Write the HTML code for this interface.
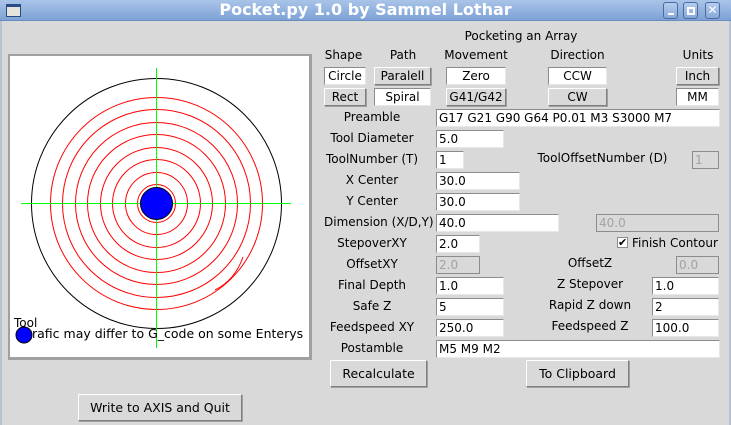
<!DOCTYPE html>
<html><head><style>
*{box-sizing:border-box;margin:0;padding:0}
body{width:731px;height:425px;background:#d9d9d9;font-family:"DejaVu Sans","Liberation Sans",sans-serif;font-size:12px;color:#000;position:relative;overflow:hidden}
.a{position:absolute}
.tb{left:0;top:0;width:731px;height:21px;background:linear-gradient(#a9c4e8,#7ea2d6);border-bottom:1px solid #6a8cc0}
.t{left:0;top:0px;width:731px;text-align:center;color:#fff;font-weight:bold;font-size:16px}
.wb{top:2px;width:15px;height:17px;border:1px solid #4a6aa0;border-radius:3px;background:linear-gradient(#b5cdee,#86a8d8)}
.e{position:absolute;background:#fff;border:1px solid #8c8c8c;border-right-color:#e8e8e8;border-bottom-color:#e8e8e8;height:18px;line-height:16px;padding-left:2px;white-space:nowrap}
.d{background:#d9d9d9;color:#a3a3a3;border-color:#8c8c8c}
.c{text-align:center;padding:0}
.b{position:absolute;background:#d9d9d9;border:1px solid #fff;border-right-color:#7f7f7f;border-bottom-color:#7f7f7f;box-shadow:1px 1px 0 #a0a0a0;height:18px;line-height:16px;text-align:center}
.l{position:absolute;text-align:center;white-space:nowrap}
.lc{width:110px;left:317px}
.rc{width:130px;left:525px}
</style></head><body>
<div class="a tb"></div>
<div class="a" style="left:6px;top:4px;width:15px;height:13px;border:1px solid #2b4b85;border-top-width:3px;background:#e4e4dc"></div>
<div class="a t">Pocket.py 1.0 by Sammel Lothar</div>
<div class="a wb" style="left:663px"><div class="a" style="left:4px;top:10px;width:6px;height:2px;background:#fff"></div></div>
<div class="a wb" style="left:683px"><div class="a" style="left:3px;top:4px;width:8px;height:8px;border:2px solid #fff"></div></div>
<div class="a wb" style="left:705px;color:#fff;font-weight:bold;font-size:12px;text-align:center;line-height:15px">✕</div>
<div class="a" style="left:0;top:21px;width:2px;height:404px;background:#b8c2d0"></div>
<div class="a" style="left:729px;top:21px;width:2px;height:404px;background:#b8c2d0"></div>

<!-- canvas -->
<div class="a" style="left:8px;top:54px;width:304px;height:306px;background:#a0a0a0"></div>
<div class="a" style="left:10px;top:56px;width:299px;height:301px;background:#fff"></div>
<svg class="a" style="left:0;top:0" width="320" height="360">
<circle cx="156.5" cy="203.5" r="125" fill="none" stroke="#000" stroke-width="1"/>
<g fill="none" stroke="#f00" stroke-width="1">
<circle cx="156.5" cy="203.5" r="106"/><circle cx="156.5" cy="203.5" r="94"/>
<circle cx="156.5" cy="203.5" r="81"/><circle cx="156.5" cy="203.5" r="69"/>
<circle cx="156.5" cy="203.5" r="56"/><circle cx="156.5" cy="203.5" r="44"/>
<circle cx="156.5" cy="203.5" r="31"/><circle cx="156.5" cy="203.5" r="19"/>
<path d="M156.5 203.5H263"/>
<path d="M243 257 Q235 280 215 290"/>
</g>
<path d="M156.5 68V348M21 203.5H291" stroke="#0f0" stroke-width="1"/>
<circle cx="156.5" cy="203.5" r="16" fill="#00f" stroke="#000"/>
<circle cx="24" cy="335" r="8" fill="#00f" stroke="#000"/>
</svg>
<div class="l" style="left:14px;top:316px">Tool</div>
<div class="l" style="left:32px;top:326px;font-size:12.5px">rafic may differ to G_code on some Enterys</div>
<div class="b" style="left:78px;top:394px;width:164px;height:27px;line-height:25px;font-size:12.5px">Write to AXIS and Quit</div>

<!-- right panel -->
<div class="l" style="left:430px;top:29px;width:182px">Pocketing an Array</div>
<div class="l" style="left:320px;top:48px;width:47px">Shape</div>
<div class="l" style="left:374px;top:48px;width:58px">Path</div>
<div class="l" style="left:440px;top:48px;width:72px">Movement</div>
<div class="l" style="left:540px;top:48px;width:75px">Direction</div>
<div class="l" style="left:670px;top:48px;width:56px">Units</div>

<div class="e c" style="left:324px;top:67px;width:42px">Circle</div>
<div class="b" style="left:374px;top:67px;width:57px">Paralell</div>
<div class="e c" style="left:446px;top:67px;width:60px">Zero</div>
<div class="e c" style="left:548px;top:67px;width:59px">CCW</div>
<div class="b" style="left:676px;top:67px;width:43px">Inch</div>
<div class="b" style="left:324px;top:88px;width:42px">Rect</div>
<div class="e c" style="left:374px;top:88px;width:57px">Spiral</div>
<div class="b" style="left:446px;top:88px;width:60px">G41/G42</div>
<div class="b" style="left:548px;top:88px;width:59px">CW</div>
<div class="e c" style="left:676px;top:88px;width:43px">MM</div>

<div class="l lc" style="top:110px">Preamble</div>
<div class="e" style="left:436px;top:109px;width:284px">G17 G21 G90 G64 P0.01 M3 S3000 M7</div>
<div class="l lc" style="top:131px">Tool Diameter</div>
<div class="e" style="left:436px;top:130px;width:68px">5.0</div>
<div class="l lc" style="top:152px">ToolNumber (T)</div>
<div class="e" style="left:436px;top:151px;width:28px">1</div>
<div class="l" style="left:535px;top:151px;width:135px">ToolOffsetNumber (D)</div>
<div class="e d" style="left:692px;top:151px;width:27px">1</div>
<div class="l lc" style="top:173px">X Center</div>
<div class="e" style="left:436px;top:172px;width:84px">30.0</div>
<div class="l lc" style="top:194px">Y Center</div>
<div class="e" style="left:436px;top:193px;width:84px">30.0</div>
<div class="l" style="left:324px;top:215px;width:113px;text-align:left">Dimension (X/D,Y)</div>
<div class="e" style="left:436px;top:214px;width:123px">40.0</div>
<div class="e d" style="left:596px;top:214px;width:123px">40.0</div>
<div class="l lc" style="top:236px">StepoverXY</div>
<div class="e" style="left:436px;top:235px;width:44px">2.0</div>
<div class="a" style="left:617px;top:237px;width:11px;height:11px;background:#fff;border:1px solid #8c8c8c;font-size:11px;line-height:9px;text-align:center">✔</div>
<div class="l" style="left:632px;top:236px">Finish Contour</div>
<div class="l lc" style="top:257px">OffsetXY</div>
<div class="e d" style="left:436px;top:256px;width:44px">2.0</div>
<div class="l rc" style="top:256px">OffsetZ</div>
<div class="e d" style="left:676px;top:256px;width:43px">0.0</div>
<div class="l lc" style="top:278px">Final Depth</div>
<div class="e" style="left:436px;top:277px;width:68px">1.0</div>
<div class="l rc" style="top:277px">Z Stepover</div>
<div class="e" style="left:652px;top:277px;width:67px">1.0</div>
<div class="l lc" style="top:299px">Safe Z</div>
<div class="e" style="left:436px;top:298px;width:68px">5</div>
<div class="l rc" style="top:298px">Rapid Z down</div>
<div class="e" style="left:652px;top:298px;width:67px">2</div>
<div class="l lc" style="top:320px">Feedspeed XY</div>
<div class="e" style="left:436px;top:319px;width:68px">250.0</div>
<div class="l rc" style="top:319px">Feedspeed Z</div>
<div class="e" style="left:652px;top:319px;width:67px">100.0</div>
<div class="l lc" style="top:341px">Postamble</div>
<div class="e" style="left:436px;top:340px;width:284px">M5 M9 M2</div>
<div class="b" style="left:330px;top:360px;width:97px;height:27px;line-height:25px;font-size:12.5px">Recalculate</div>
<div class="b" style="left:526px;top:360px;width:103px;height:27px;line-height:25px;font-size:12.5px">To Clipboard</div>
</body></html>
